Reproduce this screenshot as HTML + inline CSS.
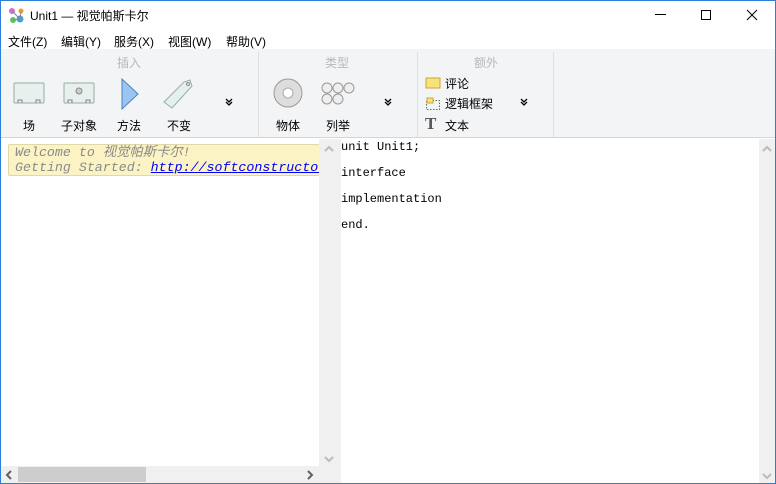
<!DOCTYPE html>
<html><head><meta charset="utf-8"><style>
*{margin:0;padding:0;box-sizing:border-box}
body{width:776px;height:484px;overflow:hidden;position:relative;background:#fff;font-family:"Liberation Sans","Noto Sans CJK SC",sans-serif;font-size:12px;color:#000}
.a{position:absolute}
.frame{left:0;top:0;width:776px;height:484px;border:1px solid #2b7fd4;z-index:10;pointer-events:none}
.mono{font-family:"Liberation Mono","Noto Sans CJK SC",monospace;font-size:12px}
.lbl{font-size:12px;white-space:nowrap}
.gt{color:#b8b8b8;font-size:12px}
</style></head><body>
<div class="a frame"></div>
<svg class="a" style="left:8px;top:7px" width="18" height="18"><circle cx="4" cy="4" r="3" fill="#d070d0"/><circle cx="13" cy="4" r="2.5" fill="#f0a030"/><circle cx="5" cy="13" r="3" fill="#60c060"/><circle cx="12" cy="12" r="3.5" fill="#40a0e0"/><path d="M4 4L12 12M13 4L12 12M5 13L12 12" stroke="#888" stroke-width="1"/></svg>
<div class="a" style="left:30px;top:7px;font-size:12px">Unit1 — 视觉帕斯卡尔</div>
<div class="a" style="left:655px;top:14px;width:11px;height:1px;background:#000"></div>
<div class="a" style="left:701px;top:10px;width:10px;height:10px;border:1px solid #000"></div>
<svg class="a" style="left:746px;top:9px" width="12" height="12"><path d="M1 1L11 11M11 1L1 11" stroke="#000" stroke-width="1"/></svg>
<div class="a" style="left:8px;top:33px">文件(Z)</div>
<div class="a" style="left:61px;top:33px">编辑(Y)</div>
<div class="a" style="left:114px;top:33px">服务(X)</div>
<div class="a" style="left:168px;top:33px">视图(W)</div>
<div class="a" style="left:226px;top:33px">帮助(V)</div>
<div class="a" style="left:1px;top:49px;width:774px;height:89px;background:#f3f4f6;border-bottom:1px solid #d5d5d5"></div>
<div class="a" style="left:258px;top:52px;width:1px;height:85px;background:#e0e0e0"></div>
<div class="a" style="left:417px;top:52px;width:1px;height:85px;background:#e0e0e0"></div>
<div class="a" style="left:553px;top:52px;width:1px;height:85px;background:#e0e0e0"></div>
<div class="a gt" style="left:117px;top:54px">插入</div>
<div class="a gt" style="left:325px;top:54px">类型</div>
<div class="a gt" style="left:474px;top:54px">额外</div>
<svg class="a" style="left:13px;top:82px" width="32" height="24"><rect x="1" y="1" width="30" height="20" fill="#e8f0ee" stroke="#9aa" rx="1"/><path d="M5 21v-3h4v3M23 21v-3h4v3" stroke="#788" fill="none"/></svg>
<svg class="a" style="left:63px;top:82px" width="32" height="24"><rect x="1" y="1" width="30" height="20" fill="#e8f0ee" stroke="#9aa" rx="1"/><circle cx="16" cy="9" r="3" fill="#ccc" stroke="#888"/><path d="M5 21v-3h4v3M23 21v-3h4v3" stroke="#788" fill="none"/></svg>
<svg class="a" style="left:120px;top:78px" width="20" height="32"><path d="M2 1L18 16L2 31Z" fill="#9cc4f0" stroke="#4a80c8"/></svg>
<svg class="a" style="left:162px;top:76px" width="34" height="34"><path d="M2 26L22 6L28 4L30 10L10 32Z" fill="#e4f0ee" stroke="#9aa"/><circle cx="26" cy="8" r="1.5" fill="none" stroke="#888"/></svg>
<svg class="a" style="left:224px;top:97px" width="10" height="10"><path d="M2 2L5 5L8 2M2 5L5 8L8 5" stroke="#000" fill="none" stroke-width="1.3"/></svg>
<div class="a lbl" style="left:23px;top:117px">场</div>
<div class="a lbl" style="left:61px;top:117px">子对象</div>
<div class="a lbl" style="left:117px;top:117px">方法</div>
<div class="a lbl" style="left:167px;top:117px">不变</div>
<svg class="a" style="left:273px;top:78px" width="30" height="30"><circle cx="15" cy="15" r="14" fill="#ddd" stroke="#999"/><circle cx="15" cy="15" r="5" fill="#fff" stroke="#aaa"/></svg>
<svg class="a" style="left:321px;top:82px" width="34" height="24"><g fill="#eee" stroke="#999"><circle cx="6" cy="6" r="5"/><circle cx="17" cy="6" r="5"/><circle cx="28" cy="6" r="5"/><circle cx="6" cy="17" r="5"/><circle cx="17" cy="17" r="5"/></g></svg>
<svg class="a" style="left:383px;top:97px" width="10" height="10"><path d="M2 2L5 5L8 2M2 5L5 8L8 5" stroke="#000" fill="none" stroke-width="1.3"/></svg>
<svg class="a" style="left:519px;top:97px" width="10" height="10"><path d="M2 2L5 5L8 2M2 5L5 8L8 5" stroke="#000" fill="none" stroke-width="1.3"/></svg>
<div class="a lbl" style="left:276px;top:117px">物体</div>
<div class="a lbl" style="left:326px;top:117px">列举</div>
<svg class="a" style="left:425px;top:76px" width="16" height="14"><rect x="1" y="2" width="14" height="10" fill="#f8e27a" stroke="#c8a830"/></svg>
<div class="a lbl" style="left:445px;top:75px">评论</div>
<svg class="a" style="left:425px;top:97px" width="16" height="14"><rect x="1.5" y="3.5" width="13" height="9" fill="none" stroke="#666" stroke-dasharray="1.5 1.5"/><rect x="2" y="1" width="6" height="5" fill="#f8e27a" stroke="#c8a830"/></svg>
<div class="a lbl" style="left:445px;top:95px">逻辑框架</div>
<div class="a" style="left:425px;top:114px;font-family:'Liberation Serif',serif;font-size:17px;color:#555;font-weight:bold">T</div>
<div class="a lbl" style="left:445px;top:117px">文本</div>
<div class="a" style="left:8px;top:144px;width:312px;height:32px;background:#fbf3c4;border:1px solid #e0d8a8;border-right:none;border-radius:2px"></div>
<div class="a mono" style="left:15px;top:145px;color:#8a8a8a;font-style:italic;white-space:nowrap;font-size:13.3px;line-height:15px">Welcome to 视觉帕斯卡尔!</div>
<div class="a mono" style="left:15px;top:160px;color:#8a8a8a;font-style:italic;white-space:nowrap;width:304px;overflow:hidden;font-size:13.3px;line-height:15px">Getting Started: <span style="color:#00f;text-decoration:underline">http://softconstructors</span></div>
<div class="a" style="left:319px;top:139px;width:22px;height:344px;background:#f0f0f0"></div>
<svg class="a" style="left:324px;top:145px" width="10" height="8"><path d="M1 6L5 2L9 6" stroke="#bbb" stroke-width="2" fill="none"/></svg>
<svg class="a" style="left:324px;top:455px" width="10" height="8"><path d="M1 2L5 6L9 2" stroke="#bbb" stroke-width="2" fill="none"/></svg>
<div class="a" style="left:1px;top:466px;width:318px;height:17px;background:#f0f0f0"></div>
<div class="a" style="left:18px;top:467px;width:128px;height:15px;background:#cdcdcd"></div>
<svg class="a" style="left:5px;top:470px" width="8" height="10"><path d="M6 1L2 5L6 9" stroke="#606060" stroke-width="2" fill="none"/></svg>
<svg class="a" style="left:306px;top:470px" width="8" height="10"><path d="M2 1L6 5L2 9" stroke="#606060" stroke-width="2" fill="none"/></svg>
<div class="a mono" style="left:341px;top:134px;line-height:26px;white-space:pre">unit Unit1;
interface
implementation
end.</div>
<div class="a" style="left:759px;top:139px;width:16px;height:344px;background:#f0f0f0"></div>
<svg class="a" style="left:762px;top:145px" width="10" height="8"><path d="M1 6L5 2L9 6" stroke="#bbb" stroke-width="2" fill="none"/></svg>
<svg class="a" style="left:762px;top:472px" width="10" height="8"><path d="M1 2L5 6L9 2" stroke="#bbb" stroke-width="2" fill="none"/></svg>
</body></html>
